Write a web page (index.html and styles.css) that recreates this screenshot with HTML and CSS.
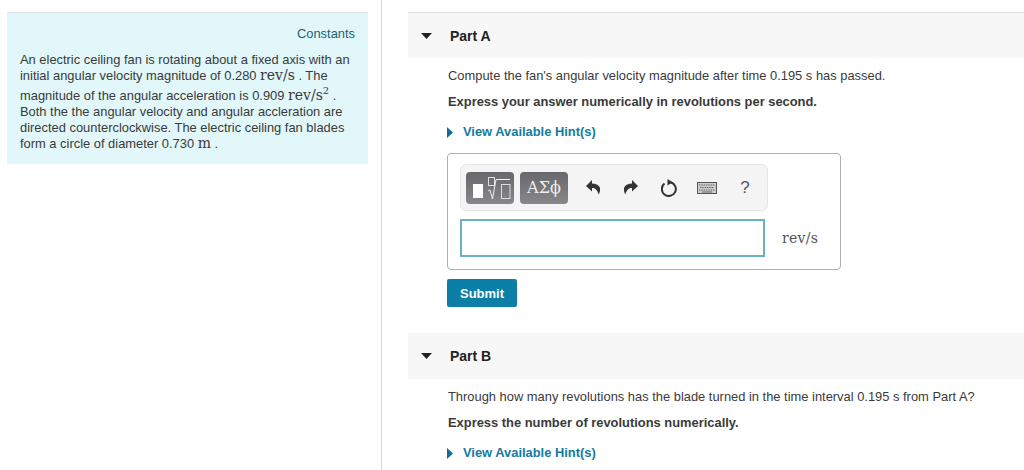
FILE: index.html
```html
<!DOCTYPE html>
<html lang="en">
<head>
<meta charset="utf-8">
<title>Electric ceiling fan</title>
<link rel="stylesheet" href="styles.css">
</head>
<body>
<div class="page">
  <aside class="side">
    <div class="panel">
      <div class="constants">Constants</div>
      <p class="problem">An electric ceiling fan is rotating about a fixed axis with an initial angular velocity magnitude of 0.280 <span class="m">rev/s</span> . The magnitude of the angular acceleration is 0.909 <span class="m">rev/s<sup>2</sup></span> . Both the the angular velocity and angular accleration are directed counterclockwise. The electric ceiling fan blades form a circle of diameter 0.730 <span class="m">m</span> .</p>
    </div>
  </aside>
  <main class="main">
    <section class="part part-a">
      <header class="part-head">
        <svg class="caret" width="11" height="6" viewBox="0 0 11 6"><path d="M0 0h11L5.500 6z"/></svg>
        <h2>Part A</h2>
      </header>
      <div class="part-body">
        <p class="q">Compute the fan's angular velocity magnitude after time 0.195 s has passed.</p>
        <p class="ins">Express your answer numerically in revolutions per second.</p>
        <a class="hint"><svg width="6" height="11" viewBox="0 0 6 11"><path d="M0 0l6 5.500L0 11z"/></svg>View Available Hint(s)</a>
        <div class="answer">
          <div class="toolbar">
            <div class="tool">
              <svg width="48" height="32" viewBox="0 0 48 32">
                <rect x="7" y="12" width="10" height="14" fill="#fff"/>
                <rect x="22.500" y="5.500" width="6" height="8" fill="none" stroke="#ddd"/>
                <path d="M22 19l2-1 2.500 9L30 7.500h14" fill="none" stroke="#eee"/>
                <rect x="35.500" y="12.500" width="8.500" height="14" fill="none" stroke="#ddd"/>
              </svg>
            </div>
            <div class="tool tool-greek">ΑΣϕ</div>
            <svg class="ic ic-undo" width="14" height="15" viewBox="0 0 14 15"><path d="M6 0L0 6l6 5.500V8c3 0 5.500 1.500 6.500 6.500C14 12 14.500 10 14 8c-1-3-4-4.500-8-4.500z" fill="#333"/></svg>
            <svg class="ic ic-redo" width="14" height="15" viewBox="0 0 14 15"><path d="M8 0l6 6-6 5.500V8c-3 0-5.500 1.500-6.500 6.500C0 12-.5 10 0 8c1-3 4-4.500 8-4.500z" fill="#333"/></svg>
            <svg class="ic ic-reload" width="16" height="18" viewBox="0 0 16 18"><path d="M9.500 3.200A7 7 0 1 1 3.500 4.500" fill="none" stroke="#333" stroke-width="2"/><path d="M6.500 0l5 3.200-5 3.200z" fill="#333"/></svg>
            <svg class="ic ic-keys" width="20" height="12" viewBox="0 0 20 12"><rect x=".5" y=".5" width="19" height="11" fill="#ccc" stroke="#555"/><path d="M2 3h16M3 5.500h14M2 8h16" stroke="#666" stroke-dasharray="1.500 .8"/><path d="M5 10h10" stroke="#666"/></svg>
            <span class="ic ic-help">?</span>
          </div>
          <div class="input-row">
            <div class="input"></div>
            <span class="unit">rev/s</span>
          </div>
        </div>
        <button class="submit" type="button">Submit</button>
      </div>
    </section>
    <section class="part part-b">
      <header class="part-head">
        <svg class="caret" width="11" height="6" viewBox="0 0 11 6"><path d="M0 0h11L5.500 6z"/></svg>
        <h2>Part B</h2>
      </header>
      <div class="part-body">
        <p class="q">Through how many revolutions has the blade turned in the time interval 0.195 s from Part A?</p>
        <p class="ins">Express the number of revolutions numerically.</p>
        <a class="hint"><svg width="6" height="11" viewBox="0 0 6 11"><path d="M0 0l6 5.500L0 11z"/></svg>View Available Hint(s)</a>
      </div>
    </section>
  </main>
</div>
</body>
</html>
```

FILE: styles.css
```css
* { box-sizing: border-box; }
html, body { margin: 0; padding: 0; background: #fff; }
body {
  width: 1024px;
  height: 470px;
  overflow: hidden;
  font-family: "Liberation Sans", Arial, sans-serif;
  font-size: 12.900px;
  color: #3a3a3a;
}
.page { display: flex; height: 470px; }
.side {
  width: 382px;
  flex: none;
  padding: 12px 13px 0 7px;
  border-right: 1px solid #d5d8e2;
}
.panel {
  background: #e1f7fa;
  border-top: 1px solid #dde3ea;
  height: 152px;
  padding: 13px 13px 0 13px;
}
.constants { text-align: right; color: #1d5f72; line-height: 16px; }
.problem { margin: 10px 0 0; line-height: 16px; }
.m { font-family: "DejaVu Serif", "Liberation Serif", serif; font-size: 14px; line-height: 0; color: #3a3a3a; }
sup { font-size: 10px; line-height: 1; vertical-align: 6px; }
sup::before { content: ""; display: inline-block; width: 0; height: 10px; }
.main { flex: 1; padding: 12px 0 0 26px; min-width: 0; }
.part-head {
  display: flex;
  align-items: center;
  height: 46px;
  background: #f7f7f7;
  padding-left: 13px;
}
.part-a .part-head { border-top: 1px solid #e2e2e2; }
.caret { fill: #222; margin-right: 18px; }
h2 { margin: 0; font-size: 14px; font-weight: bold; color: #222; }
.part-body { padding: 0 0 0 40px; }
.q { margin: 10px 0 0; line-height: 16px; }
.ins { margin: 10px 0 0; line-height: 16px; font-weight: bold; }
.hint {
  display: flex;
  align-items: center;
  margin-top: 14px;
  margin-left: -1px;
  line-height: 16px;
  font-weight: bold;
  color: #137c9e;
}
.hint svg { fill: #0f6f93; margin-right: 10px; }
.answer {
  width: 394px;
  height: 117px;
  margin: 13px 0 0 -1px;
  padding: 10px 12px 0;
  border: 1px solid #b0b0b0;
  border-radius: 4px;
}
.toolbar {
  display: flex;
  align-items: center;
  width: 308px;
  height: 47px;
  padding: 0 5px;
  gap: 6px;
  background: #f4f4f4;
  border: 1px solid #e6e6e6;
  border-radius: 6px;
}
.tool {
  display: flex;
  flex: none;
  align-items: center;
  justify-content: center;
  width: 48px;
  height: 32px;
  border-radius: 4px;
  background: linear-gradient(#68686c, #88888b);
  color: #eee;
}
.tool-greek { font-family: "DejaVu Serif", "Liberation Serif", serif; font-size: 16px; }
.ic { flex: none; }
.ic-undo { margin-left: 12px; }
.ic-redo { margin-left: 18px; }
.ic-reload { margin-left: 17px; }
.ic-keys { margin-left: 14px; }
.ic-help { width: 10px; margin-left: 17px; text-align: center; font-size: 17px; color: #555; }
.input-row { display: flex; align-items: center; margin-top: 8px; }
.input {
  width: 305px;
  height: 38px;
  background: #fff;
  border: 2px solid #6ab0c8;
}
.unit { margin-left: 17px; font-family: "DejaVu Serif", "Liberation Serif", serif; font-size: 14px; letter-spacing: .3px; color: #555; }
.submit {
  display: block;
  width: 70px;
  height: 28px;
  margin: 9px 0 0 -1px;
  padding: 0;
  border: 0;
  border-radius: 2px;
  background: #0b7fa5;
  color: #fff;
  font: bold 13px "Liberation Sans", Arial, sans-serif;
}
.part-b { margin-top: 26px; }
```
